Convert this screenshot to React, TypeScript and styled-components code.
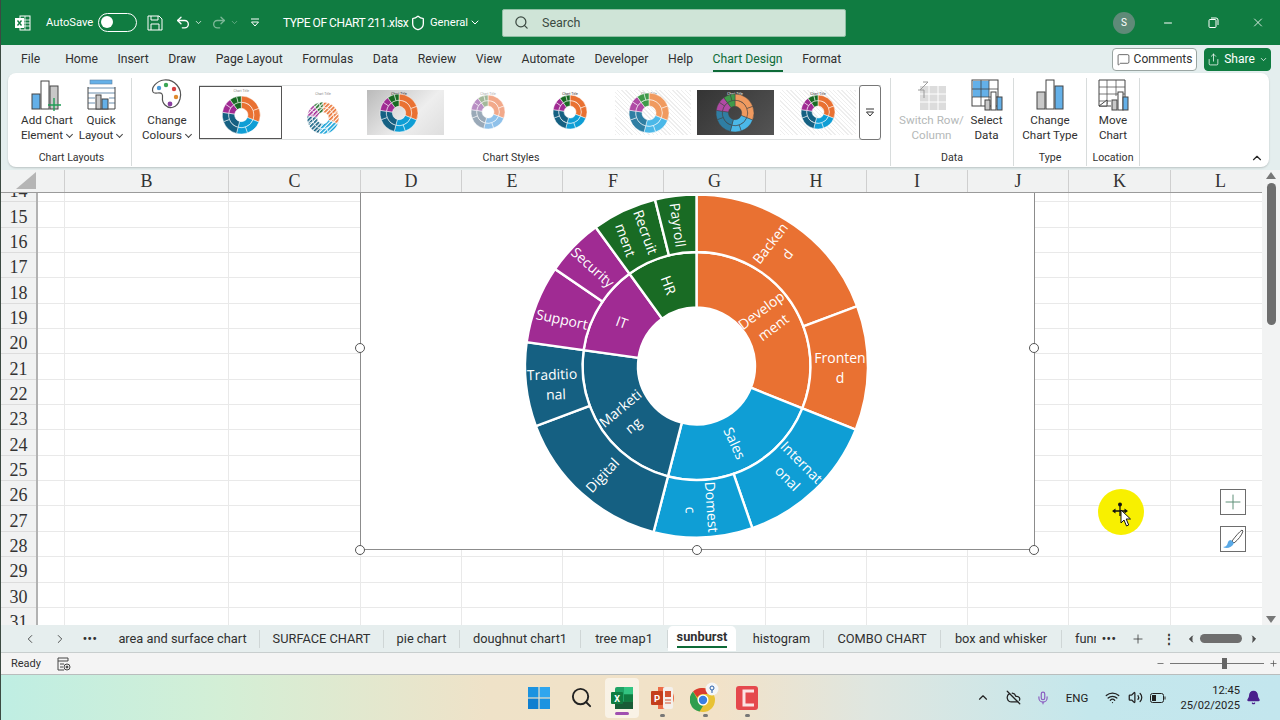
import React from "react";
import styled, { createGlobalStyle } from "styled-components";
import {
  Bell,
  ChevronDown,
  ChevronLeft,
  ChevronRight,
  ChevronUp,
  CloudOff,
  MessageSquare,
  Mic,
  Minus,
  Plus,
  Search,
  Share,
  Shield,
  Undo2,
  Redo2,
  Volume2,
  Wifi,
  X,
} from "lucide-react";

const GlobalStyle = createGlobalStyle`
  html, body { margin: 0; padding: 0; background: #fff; }
  * { box-sizing: border-box; }
`;

const FONT = `Roboto, "Liberation Sans", sans-serif`;

/* ---------- sunburst data ---------- */

type Arc = { from: number; to: number; color: number };

const INNER: Arc[] = [
  { from: 0, to: 111.8, color: 0 },
  { from: 111.8, to: 194.5, color: 1 },
  { from: 194.5, to: 278, color: 2 },
  { from: 278, to: 324, color: 3 },
  { from: 324, to: 360, color: 4 },
];

const OUTER: Arc[] = [
  { from: 0, to: 69.6, color: 0 },
  { from: 69.6, to: 111.8, color: 0 },
  { from: 111.8, to: 161, color: 1 },
  { from: 161, to: 194.5, color: 1 },
  { from: 194.5, to: 249.5, color: 2 },
  { from: 249.5, to: 278, color: 2 },
  { from: 278, to: 304.4, color: 3 },
  { from: 304.4, to: 324, color: 3 },
  { from: 324, to: 346, color: 4 },
  { from: 346, to: 360, color: 4 },
];

const OFFICE = ["#e97132", "#0f9ed5", "#156082", "#a02b93", "#196b24"];
const PASTEL = ["#f2a98a", "#8fc1ea", "#9aa9b8", "#b98fc4", "#a3b89a"];
const LIGHT = ["#f09a5f", "#4bb8e8", "#2f7ea3", "#b04aa5", "#3f9a4a"];

const LABELS = [
  { text: "Backen", x: 770, y: 243, r: -52 },
  { text: "d", x: 787, y: 254, r: -52 },
  { text: "Develop", x: 761, y: 310, r: -37 },
  { text: "ment", x: 773, y: 327, r: -37 },
  { text: "Fronten", x: 840, y: 357, r: 0 },
  { text: "d", x: 840, y: 377, r: 0 },
  { text: "Sales", x: 735, y: 443, r: 65 },
  { text: "Internat", x: 802, y: 462, r: 45 },
  { text: "onal", x: 788, y: 478, r: 45 },
  { text: "Domest", x: 712, y: 507, r: 86 },
  { text: "c", x: 691, y: 510, r: 86 },
  { text: "Marketi", x: 620, y: 408, r: -40 },
  { text: "ng", x: 633, y: 425, r: -40 },
  { text: "Digital", x: 602, y: 475, r: -47 },
  { text: "Traditio", x: 552, y: 374, r: -2 },
  { text: "nal", x: 556, y: 394, r: -2 },
  { text: "IT", x: 622, y: 322, r: 20 },
  { text: "Support", x: 562, y: 319, r: 12 },
  { text: "Security", x: 593, y: 267, r: 42 },
  { text: "HR", x: 669, y: 285, r: 70 },
  { text: "Recruit", x: 646, y: 232, r: 70 },
  { text: "ment", x: 626, y: 240, r: 70 },
  { text: "Payroll", x: 678, y: 225, r: 82 },
];

const polar = (cx: number, cy: number, r: number, deg: number) => {
  const a = ((deg - 90) * Math.PI) / 180;
  return [cx + r * Math.cos(a), cy + r * Math.sin(a)];
};

const arcPath = (cx: number, cy: number, r0: number, r1: number, a: Arc) => {
  const [x0, y0] = polar(cx, cy, r0, a.from);
  const [x1, y1] = polar(cx, cy, r1, a.from);
  const [x2, y2] = polar(cx, cy, r1, a.to);
  const [x3, y3] = polar(cx, cy, r0, a.to);
  const large = a.to - a.from > 180 ? 1 : 0;
  return `M${x0} ${y0}L${x1} ${y1}A${r1} ${r1} 0 ${large} 1 ${x2} ${y2}L${x3} ${y3}A${r0} ${r0} 0 ${large} 0 ${x0} ${y0}Z`;
};

const Rings = ({
  cx,
  cy,
  radii,
  fills,
  gap,
  line = "#fff",
}: {
  cx: number;
  cy: number;
  radii: [number, number, number];
  fills: string[];
  gap: number;
  line?: string;
}) => (
  <>
    {INNER.map((a) => (
      <path
        key={`i${a.from}`}
        d={arcPath(cx, cy, radii[0], radii[1], a)}
        fill={fills[a.color]}
        stroke={line}
        strokeWidth={gap}
      />
    ))}
    {OUTER.map((a) => (
      <path
        key={`o${a.from}`}
        d={arcPath(cx, cy, radii[1], radii[2], a)}
        fill={fills[a.color]}
        stroke={line}
        strokeWidth={gap}
      />
    ))}
  </>
);

/* ---------- shell ---------- */

const Page = styled.div`
  width: 1280px;
  height: 720px;
  display: flex;
  flex-direction: column;
  overflow: hidden;
  position: relative;
  font-family: ${FONT};
  color: #262626;
  background: #e4eeee;
  border-left: 1px solid #3c4a42;
`;

const TitleBar = styled.header`
  height: 45px;
  flex: none;
  display: flex;
  align-items: center;
  padding-left: 14px;
  background: #107c41;
  color: #fff;
  font-size: 11.2px;
`;

const Slot = styled.span<{ $w: number; $ml?: number }>`
  flex: none;
  width: ${(p) => p.$w}px;
  margin-left: ${(p) => p.$ml ?? 0}px;
  display: flex;
  align-items: center;
  justify-content: center;
  white-space: nowrap;
`;

const TitleText = styled(Slot)`
  justify-content: flex-start;
`;

const FileName = styled(TitleText)`
  font-size: 12px;
  letter-spacing: -0.45px;
`;

const Toggle = styled.span`
  width: 39px;
  height: 19px;
  margin-left: 3px;
  border: 1.5px solid #fff;
  border-radius: 10px;
  padding: 2px;
  flex: none;
  &::before {
    content: "";
    display: block;
    width: 12px;
    height: 12px;
    border-radius: 50%;
    background: #fff;
  }
`;

const SearchBox = styled.div`
  width: 344px;
  height: 28px;
  margin-left: 21px;
  flex: none;
  display: flex;
  align-items: center;
  gap: 13px;
  padding-left: 11px;
  background: #cfe4d7;
  border: 1px solid #8fbfa3;
  border-radius: 2px;
  color: #3c4a42;
  font-size: 12.5px;
`;

const Avatar = styled.span`
  width: 22px;
  height: 22px;
  margin-left: 267px;
  flex: none;
  border-radius: 50%;
  background: #5f8a78;
  font-size: 10px;
  display: flex;
  align-items: center;
  justify-content: center;
`;

const MenuBar = styled.nav`
  height: 28px;
  flex: none;
  display: flex;
  align-items: center;
  padding: 0 9px 0 20px;
  font-size: 12.2px;
  color: #303030;
`;

const MenuItem = styled.span<{ $active?: boolean; $ml?: number }>`
  margin-left: ${(p) => p.$ml ?? 19.6}px;
  height: 100%;
  display: flex;
  align-items: center;
  position: relative;
  color: ${(p) => (p.$active ? "#0e6b38" : "inherit")};
  &::after {
    content: "";
    display: ${(p) => (p.$active ? "block" : "none")};
    position: absolute;
    left: 0;
    right: 0;
    bottom: 1px;
    height: 2px;
    background: #0e6b38;
  }
`;

const MenuActions = styled.div`
  margin-left: auto;
  display: flex;
  gap: 7px;
`;

const CommentsButton = styled.span`
  width: 85px;
  height: 23px;
  display: flex;
  align-items: center;
  justify-content: center;
  gap: 4px;
  background: #fff;
  border: 1px solid #9aa5a2;
  border-radius: 4px;
  font-size: 12px;
`;

const ShareButton = styled(CommentsButton)`
  width: 67px;
  background: #107c41;
  border-color: #107c41;
  color: #fff;
`;

/* ---------- ribbon ---------- */

const Ribbon = styled.section`
  height: 94px;
  flex: none;
  margin: 0 11px 3px 7px;
  display: flex;
  background: #fff;
  border-radius: 8px;
  padding: 5px 0 1px;
  box-shadow: 0 1px 2px rgba(0, 0, 0, 0.18);
`;

const Group = styled.div<{ $w: number }>`
  width: ${(p) => p.$w}px;
  flex: none;
  display: flex;
  flex-direction: column;
  border-right: 1px solid #d8dcdc;
`;

const GroupBody = styled.div<{ $pl?: number }>`
  flex: 1;
  display: flex;
  align-items: flex-start;
  padding-left: ${(p) => p.$pl ?? 0}px;
`;

const GroupLabel = styled.div<{ $pl?: number }>`
  height: 16px;
  padding-left: ${(p) => p.$pl ?? 0}px;
  text-align: center;
  font-size: 10.6px;
  line-height: 16px;
  color: #303030;
`;

const RibbonButton = styled.div<{ $w: number; $muted?: boolean }>`
  width: ${(p) => p.$w}px;
  flex: none;
  display: flex;
  flex-direction: column;
  align-items: center;
  font-size: 11.6px;
  line-height: 15px;
  text-align: center;
  white-space: nowrap;
  color: ${(p) => (p.$muted ? "#b4b8b8" : "#303030")};
  svg.ribbon-icon {
    width: 34px;
    height: 34px;
    margin-bottom: 1px;
  }
`;

const Caret = styled.span`
  &::after {
    content: "";
    display: inline-block;
    width: 4px;
    height: 4px;
    margin: 0 1px 2px 4px;
    border-right: 1px solid #444;
    border-bottom: 1px solid #444;
    transform: rotate(45deg);
  }
`;

const Gallery = styled.div`
  width: 682px;
  height: 55px;
  margin: 7px 0 0 5px;
  flex: none;
  display: flex;
  align-items: center;
  border-top: 1px solid #dcdfdf;
  border-bottom: 1px solid #dcdfdf;
`;

const Thumb = styled.div<{ $bg: string; $selected?: boolean }>`
  width: 82.5px;
  height: ${(p) => (p.$selected ? "53px" : "45px")};
  flex: none;
  padding: ${(p) => (p.$selected ? "0" : "0 3px")};
  background: ${(p) => p.$bg};
  background-clip: content-box;
  border: ${(p) => (p.$selected ? "1px solid #555" : "none")};
  svg { display: block; width: 100%; height: 100%; }
`;

const GalleryMore = styled.div`
  width: 22px;
  height: 55px;
  flex: none;
  display: flex;
  align-items: center;
  justify-content: center;
  background: #fff;
  border: 1px solid #777;
  border-radius: 3px;
`;

const Collapse = styled.div`
  margin-left: auto;
  align-self: flex-end;
  padding: 0 5px 1px 0;
  line-height: 0;
`;

/* ---------- sheet ---------- */

const COLS = [
  ["", 27],
  ["B", 164],
  ["C", 132],
  ["D", 101],
  ["E", 101],
  ["F", 101],
  ["G", 102],
  ["H", 101],
  ["I", 101],
  ["J", 101],
  ["K", 102],
  ["L", 100],
] as const;

const ROWS = Array.from({ length: 18 }, (_, i) => 14 + i);

const Workbook = styled.div`
  height: 455px;
  flex: none;
  display: flex;
  position: relative;
`;

const SheetColumn = styled.div`
  width: 1261px;
  flex: none;
  display: flex;
  flex-direction: column;
  overflow: hidden;
`;

const ColumnBar = styled.div`
  height: 23px;
  flex: none;
  display: flex;
  background: #f1f2f2;
  border-bottom: 1px solid #9b9b9b;
  font-family: "Liberation Serif", serif;
  font-size: 18px;
  color: #333;
`;

const Corner = styled.div`
  width: 37px;
  flex: none;
  svg { display: block; }
`;

const ColumnHead = styled.div<{ $w: number }>`
  width: ${(p) => p.$w}px;
  flex: none;
  display: flex;
  align-items: center;
  justify-content: center;
  border-right: 1px solid #cfcfcf;
`;

const SheetArea = styled.div`
  flex: 1;
  display: flex;
  position: relative;
  overflow: hidden;
  background: #fff;
`;

const RowBar = styled.div`
  width: 37px;
  flex: none;
  background: #f1f2f2;
  border-right: 2px solid #b2b2b2;
  font-family: "Liberation Serif", serif;
  font-size: 18px;
  color: #333;
  overflow: hidden;
`;

const RowStack = styled.div`
  margin-top: -16px;
`;

const RowHead = styled.div`
  height: 25.35px;
  padding-top: 5px;
  display: flex;
  align-items: center;
  justify-content: center;
  border-bottom: 1px solid #dcdcdc;
`;

const CellGrid = styled.div`
  flex: none;
  margin-top: -16px;
  display: grid;
  grid-template-columns: ${COLS.map((c) => `${c[1]}px`).join(" ")};
  grid-auto-rows: 25.35px;
  align-content: start;
`;

const Cell = styled.div`
  border-right: 1px solid #e9e9e9;
  border-bottom: 1px solid #e9e9e9;
`;

const ScrollTrack = styled.div`
  flex: 1;
  background: #f2f3f3;
  display: flex;
  flex-direction: column;
  align-items: center;
`;

const ArrowUp = styled.span`
  margin-top: 2px;
  width: 0;
  height: 0;
  border-left: 5px solid transparent;
  border-right: 5px solid transparent;
  border-bottom: 7px solid #777;
`;

const ArrowDown = styled.span`
  margin-top: auto;
  margin-bottom: 2px;
  width: 0;
  height: 0;
  border-left: 5px solid transparent;
  border-right: 5px solid transparent;
  border-top: 7px solid #777;
`;

const ScrollThumb = styled.span`
  width: 9px;
  height: 142px;
  margin-top: 4px;
  border-radius: 5px;
  background: #6e6e6e;
`;

const ChartBox = styled.div`
  position: absolute;
  left: 359px;
  top: -1px;
  width: 675px;
  height: 358px;
  background: #fff;
  border: 1px solid #8c8c8c;
  svg { display: block; }
`;

const Handle = styled.span<{ $x: number; $y: number }>`
  position: absolute;
  left: ${(p) => p.$x}px;
  top: ${(p) => p.$y}px;
  width: 10px;
  height: 10px;
  margin: -5px 0 0 -5px;
  background: #fff;
  border: 1.5px solid #555;
  border-radius: 50%;
`;

const FloatButton = styled.div<{ $top: number }>`
  position: absolute;
  left: 1219px;
  top: ${(p) => p.$top}px;
  width: 26px;
  height: 26px;
  background: #fff;
  border: 1px solid #6d6d6d;
  display: flex;
  align-items: center;
  justify-content: center;
`;

const Spotlight = styled.div`
  position: absolute;
  left: 1097px;
  top: 296px;
  width: 46px;
  height: 46px;
  border-radius: 50%;
  background: #f8f000;
  display: flex;
  align-items: center;
  justify-content: center;
`;

/* ---------- tabs, status, taskbar ---------- */

const TabBar = styled.div`
  height: 28px;
  flex: none;
  display: flex;
  align-items: center;
  background: #e6eeee;
  font-size: 12.8px;
  color: #303030;
  border-bottom: 1px solid #c8cece;
  overflow: hidden;
`;

const TabNav = styled.span<{ $w: number; $ml?: number }>`
  width: ${(p) => p.$w}px;
  margin-left: ${(p) => p.$ml ?? 0}px;
  flex: none;
  display: flex;
  align-items: center;
  justify-content: center;
  font-weight: 700;
  font-size: 12px;
  letter-spacing: 0.5px;
`;

const Tab = styled.span<{ $w: number; $active?: boolean; $clip?: boolean }>`
  width: ${(p) => p.$w}px;
  flex: none;
  height: ${(p) => (p.$active ? "25px" : "18px")};
  margin-top: ${(p) => (p.$active ? "-1px" : "0")};
  display: flex;
  align-items: center;
  justify-content: ${(p) => (p.$clip ? "flex-start" : "center")};
  padding-left: ${(p) => (p.$clip ? "13px" : "0")};
  overflow: hidden;
  white-space: nowrap;
  border-right: ${(p) => (p.$active || p.$clip ? "none" : "1px solid #cfd6d6")};
  background: ${(p) => (p.$active ? "#fff" : "transparent")};
  border-radius: ${(p) => (p.$active ? "5px 5px 0 0" : "0")};
  font-weight: ${(p) => (p.$active ? 700 : 400)};
`;

const ActiveTabLabel = styled.span`
  padding-bottom: 2px;
  border-bottom: 2px solid #0e6b38;
`;

const HScroll = styled.span`
  width: 42px;
  height: 9px;
  margin: 0 6px 0 3px;
  flex: none;
  border-radius: 5px;
  background: #6e6e6e;
`;

const StatusBar = styled.footer`
  height: 22px;
  flex: none;
  display: flex;
  align-items: center;
  padding-left: 10px;
  background: #f4f4f4;
  border-bottom: 1px solid #b9bdbd;
  font-size: 11px;
  color: #303030;
`;

const ZoomSlider = styled.div`
  margin-left: auto;
  display: flex;
  align-items: center;
  gap: 5px;
  padding-right: 2px;
  color: #555;
`;

const ZoomTrack = styled.span`
  width: 94px;
  height: 1px;
  background: #777;
  position: relative;
  &::after {
    content: "";
    position: absolute;
    left: 52px;
    top: -5px;
    width: 5px;
    height: 11px;
    background: #666;
  }
`;

const Taskbar = styled.div`
  flex: 1;
  display: flex;
  align-items: center;
  background: linear-gradient(
    90deg,
    #bfeee3 0%,
    #d3efd6 17%,
    #efe2c8 38%,
    #f2e2c8 56%,
    #dfe6e0 68%,
    #c4e7ec 85%,
    #c3e6ee 100%
  );
`;

const TaskIcon = styled.span<{ $w: number; $ml?: number; $dot?: string }>`
  width: ${(p) => p.$w}px;
  margin-left: ${(p) => p.$ml ?? 0}px;
  height: 45px;
  flex: none;
  display: flex;
  align-items: center;
  justify-content: center;
  position: relative;
  &::after {
    content: "";
    display: ${(p) => (p.$dot ? "block" : "none")};
    position: absolute;
    bottom: 3px;
    left: 50%;
    width: ${(p) => (p.$dot === "#a04fb0" ? "14px" : "5px")};
    height: 3px;
    margin-left: ${(p) => (p.$dot === "#a04fb0" ? "-7px" : "-2px")};
    border-radius: 2px;
    background: ${(p) => p.$dot};
  }
`;

const ActiveTask = styled(TaskIcon)`
  background: rgba(255, 255, 255, 0.55);
  border-radius: 4px;
  height: 40px;
`;

const Lang = styled.span`
  width: 34px;
  margin-left: 10px;
  font-size: 11.5px;
  text-align: center;
  color: #222;
`;

const Clock = styled.div`
  width: 70px;
  margin-left: 4px;
  font-size: 11.2px;
  line-height: 15px;
  text-align: right;
  color: #222;
`;

/* ---------- drawings ---------- */

const AddElementIcon = () => (
  <svg className="ribbon-icon" viewBox="0 0 34 34">
    <rect x="2" y="16" width="8" height="15" fill="#64b0e8" stroke="#444" />
    <rect x="11" y="3" width="8" height="28" fill="#fff" stroke="#444" />
    <rect x="20" y="8" width="8" height="23" fill="#c8c8c8" stroke="#444" />
    <path d="M24 20v13M18 27h13" stroke="#1f9d55" strokeWidth="1.4" />
  </svg>
);

const QuickLayoutIcon = () => (
  <svg className="ribbon-icon" viewBox="0 0 34 34">
    <rect x="6" y="2" width="22" height="4" fill="#64b0e8" stroke="#5a7fa0" strokeWidth=".6" />
    <path d="M4 10h27M4 15h27M4 20h7M25 20h6M4 25h7M25 25h6" stroke="#6d8fae" />
    <path d="M4 9v22h27V9" fill="none" stroke="#444" />
    <rect x="12" y="17" width="5" height="14" fill="#c8c8c8" stroke="#444" />
    <rect x="18" y="21" width="6" height="10" fill="#64b0e8" stroke="#444" />
  </svg>
);

const PaletteIcon = () => (
  <svg className="ribbon-icon" viewBox="0 0 34 34">
    <path
      d="M14 2C6 3 1 10 3 14c2 3 7-1 9 2s-2 6 3 11c4 4 12 4 15-6 3-11-6-20-16-19z"
      fill="#fff"
      stroke="#555"
      strokeWidth="1.2"
    />
    <circle cx="9" cy="10" r="2.2" fill="#4a9ad8" />
    <circle cx="16" cy="7" r="2.2" fill="#3aa655" />
    <circle cx="24" cy="11" r="2.2" fill="#d64040" />
    <circle cx="26" cy="19" r="2.2" fill="#e08a2e" />
    <circle cx="20" cy="26" r="2.4" fill="#8a3fa0" />
  </svg>
);

const SwitchIcon = () => (
  <svg className="ribbon-icon" viewBox="0 0 34 34">
    <rect x="5" y="8" width="26" height="24" fill="#dcdcdc" />
    <path d="M5 16h26M5 24h26M14 8v24M23 8v24" stroke="#fff" />
    <path d="M5 12l8-8M13 4H8M3 12h6v8" fill="none" stroke="#9a9a9a" />
  </svg>
);

const SelectDataIcon = () => (
  <svg className="ribbon-icon" viewBox="0 0 34 34">
    <rect x="2" y="2" width="26" height="26" fill="#fff" stroke="#444" />
    <rect x="3" y="3" width="16" height="16" fill="#64b0e8" />
    <path d="M2 11h26M2 19h26M11 2v26M19 2v26" stroke="#444" strokeWidth=".8" />
    <rect x="15" y="22" width="5" height="10" fill="#c8c8c8" stroke="#444" />
    <rect x="21" y="14" width="5" height="18" fill="#fff" stroke="#444" />
    <rect x="27" y="19" width="5" height="13" fill="#64b0e8" stroke="#444" />
  </svg>
);

const ChangeTypeIcon = () => (
  <svg className="ribbon-icon" viewBox="0 0 34 34">
    <rect x="4" y="14" width="8" height="17" fill="#c8c8c8" stroke="#444" />
    <rect x="13" y="2" width="8" height="29" fill="#fff" stroke="#444" />
    <rect x="22" y="8" width="8" height="23" fill="#64b0e8" stroke="#444" />
  </svg>
);

const MoveChartIcon = () => (
  <svg className="ribbon-icon" viewBox="0 0 34 34">
    <path d="M3 2h26v18M3 2v26h12" fill="#fff" stroke="#444" />
    <path d="M3 9h26M3 16h26M3 23h12M11 2v24M20 2v16" stroke="#555" strokeWidth=".8" />
    <path d="M3 28l8-6v6z" fill="#fff" stroke="#444" />
    <rect x="16" y="22" width="5" height="10" fill="#c8c8c8" stroke="#444" />
    <rect x="22" y="14" width="5" height="18" fill="#fff" stroke="#444" />
    <rect x="27" y="19" width="5" height="13" fill="#64b0e8" stroke="#444" />
  </svg>
);

const ExcelMark = () => (
  <svg width="16" height="16" viewBox="0 0 16 16">
    <rect x="5" y="1" width="10" height="14" fill="none" stroke="#fff" />
    <path d="M5 5h10M5 8h10M5 11h10M10 1v14" stroke="#fff" strokeWidth=".8" />
    <rect x="0" y="3" width="9" height="10" fill="#fff" />
    <path d="M2.5 5.5l4 5M6.5 5.5l-4 5" stroke="#107c41" strokeWidth="1.3" />
  </svg>
);

const SaveIcon = () => (
  <svg width="16" height="16" viewBox="0 0 16 16" fill="none" stroke="#fff">
    <path d="M1 1h11l3 3v11H1z" />
    <path d="M4 1v4h7V1M4 15V9h8v6" />
  </svg>
);

const CustomizeIcon = ({ color = "#fff" }: { color?: string }) => (
  <svg width="10" height="10" viewBox="0 0 10 10">
    <path d="M1 1h8" stroke={color} />
    <path d="M1.500 4h7L5 8z" fill="none" stroke={color} />
  </svg>
);

const RestoreIcon = () => (
  <svg width="11" height="11" viewBox="0 0 11 11" fill="none" stroke="#fff">
    <rect x="1" y="2.500" width="7" height="8" rx="1" />
    <path d="M3 1h5a2 2 0 0 1 2 2v5" />
  </svg>
);

const MacroIcon = () => (
  <svg width="14" height="14" viewBox="0 0 14 14" fill="none" stroke="#444">
    <path d="M1 1h10v3H1zM1 4v9h6M3 7h4M3 10h3" />
    <circle cx="10" cy="10" r="3" />
    <circle cx="10" cy="10" r="1" fill="#444" />
  </svg>
);

const WindowsLogo = () => (
  <svg width="22" height="22" viewBox="0 0 22 22">
    <rect width="10.4" height="10.4" fill="#1b93e0" />
    <rect x="11.6" width="10.4" height="10.4" fill="#2fa6ee" />
    <rect y="11.6" width="10.4" height="10.4" fill="#0f7fd0" />
    <rect x="11.6" y="11.6" width="10.4" height="10.4" fill="#1b93e0" />
  </svg>
);

const ExcelTile = () => (
  <svg width="24" height="24" viewBox="0 0 24 24">
    <rect x="5" y="1" width="18" height="22" rx="2" fill="#21a366" />
    <rect x="14" y="1" width="9" height="7.4" fill="#33c481" />
    <rect x="14" y="8.4" width="9" height="7.3" fill="#107c41" />
    <rect x="5" y="15.7" width="18" height="7.3" fill="#185c37" />
    <rect x="1" y="6" width="12" height="12" rx="1" fill="#107c41" />
    <text x="7" y="15.5" fontFamily="Roboto" fontSize="9" fontWeight="700" fill="#fff" textAnchor="middle">X</text>
  </svg>
);

const PowerPointTile = () => (
  <svg width="24" height="24" viewBox="0 0 24 24">
    <path d="M13 1a11 11 0 1 1 0 22H8V1z" fill="#ed6c47" />
    <rect x="13" y="1" width="10" height="22" rx="2" fill="#f4f0ec" />
    <rect x="15" y="5" width="6" height="6" fill="#d35230" />
    <path d="M15 14h6M15 17h6" stroke="#d35230" />
    <rect x="1" y="5" width="12" height="14" rx="1" fill="#c43e1c" />
    <text x="7" y="15.8" fontFamily="Roboto" fontSize="9.5" fontWeight="700" fill="#fff" textAnchor="middle">P</text>
  </svg>
);

const ChromeTile = () => (
  <svg width="30" height="32" viewBox="0 0 30 32">
    <circle cx="13" cy="18" r="12" fill="#e8c234" />
    <path d="M13 6a12 12 0 0 1 10.4 6H13a6 6 0 0 0-5.6 3.6L3 9.5A12 12 0 0 1 13 6z" fill="#d93c2f" />
    <path d="M3 9.5l5.2 9A6 6 0 0 0 13 24l-3.4 5.5A12 12 0 0 1 3 9.5z" fill="#2f9e4f" />
    <circle cx="13" cy="18" r="5.5" fill="#fff" />
    <circle cx="13" cy="18" r="4.2" fill="#3a7fe0" />
    <circle cx="22" cy="7" r="6.5" fill="#f4f6f8" />
    <circle cx="22" cy="6" r="2" fill="none" stroke="#2a5fa8" />
    <path d="M22 8v3" stroke="#2a5fa8" />
  </svg>
);

const CamtasiaTile = () => (
  <svg width="24" height="26" viewBox="0 0 24 26">
    <rect x="1" y="1" width="22" height="24" rx="3" fill="#e5484d" />
    <path d="M19 6h-10v14h10" fill="none" stroke="#fbe3e3" strokeWidth="3" />
  </svg>
);

const BrushIcon = () => (
  <svg width="22" height="22" viewBox="0 0 22 22">
    <path d="M20 2c-3 2-7 7-10 11l2 2c4-3 8-8 9-12z" fill="#fff" stroke="#555" />
    <path d="M9 12c-3 0-3 3-4 5-1 1-2 2-4 2 3 2 9 1 11-4z" fill="#5aa9e6" />
  </svg>
);

const MoveCursor = () => (
  <svg width="30" height="30" viewBox="0 0 30 30">
    <path d="M14 9v10M9 14h10" stroke="#111" strokeWidth="1.3" />
    <circle cx="14" cy="7.500" r="2" fill="#111" />
    <path d="M6 14l3.500-2.500v5zM22 14l-3.500-2.500v5z" fill="#111" />
    <path d="M15 13v13l3-3 2.500 6 2.200-1-2.500-6h4.300z" fill="#fff" stroke="#111" />
  </svg>
);

/* ---------- gallery ---------- */

const HATCHED = "repeating-linear-gradient(45deg,#fff,#fff 2px,#eee 2px,#eee 3px)";

const THUMBS = [
  { bg: "#fff", fills: OFFICE, cx: 41, cy: 28, r: 19, title: "#888", selected: true },
  { bg: "#fff", fills: OFFICE, cx: 41, cy: 28, r: 16, title: "#888", hatch: true },
  { bg: "linear-gradient(135deg,#b8b8b8,#eee 60%,#ddd)", fills: OFFICE, cx: 35, cy: 23, r: 19, title: "#222" },
  { bg: "#fff", fills: PASTEL, cx: 41, cy: 22, r: 17, title: "#aaa" },
  { bg: "#fff", fills: OFFICE, cx: 41, cy: 22, r: 17, title: "#222" },
  { bg: HATCHED, fills: LIGHT, cx: 37, cy: 23, r: 20, title: "#666" },
  { bg: "linear-gradient(135deg,#333,#555)", fills: LIGHT, cx: 41, cy: 23, r: 19, title: "#fff", dark: true },
  { bg: HATCHED, fills: OFFICE, cx: 41, cy: 22, r: 17, title: "#333" },
];

const Hatch = ({ color, id }: { color: string; id: string }) => (
  <pattern id={id} width="3" height="3" patternUnits="userSpaceOnUse" patternTransform="rotate(45)">
    <rect width="1.7" height="3" fill={color} />
  </pattern>
);

const GalleryThumb = ({ t, i }: { t: (typeof THUMBS)[number]; i: number }) => {
  const fills = t.hatch ? t.fills.map((_, c) => `url(#h${i}${c})`) : t.fills;
  const box = t.selected ? "0 0 80 51" : "3 0 76.500 45";
  return (
    <Thumb $bg={t.bg} $selected={t.selected}>
      <svg viewBox={box}>
        {t.hatch && (
          <defs>
            {t.fills.map((c, n) => (
              <Hatch key={c} color={c} id={`h${i}${n}`} />
            ))}
          </defs>
        )}
        <text x={t.cx} y="5" fontSize="3.4" fontFamily="Roboto" textAnchor="middle" fill={t.title}>
          Chart Title
        </text>
        <Rings
          cx={t.cx}
          cy={t.cy}
          radii={[t.r * 0.35, t.r * 0.67, t.r]}
          fills={fills}
          gap={0.5}
          line={t.dark ? "#444" : "#fff"}
        />
      </svg>
    </Thumb>
  );
};

/* ---------- page ---------- */

const MENU = [
  "Insert",
  "Draw",
  "Page Layout",
  "Formulas",
  "Data",
  "Review",
  "View",
  "Automate",
  "Developer",
  "Help",
];

const TABS = [
  { name: "area and surface chart", w: 154 },
  { name: "SURFACE CHART", w: 124 },
  { name: "pie chart", w: 76 },
  { name: "doughnut chart1", w: 121 },
  { name: "tree map1", w: 87 },
];

const TABS_AFTER = [
  { name: "histogram", w: 84 },
  { name: "COMBO CHART", w: 117 },
  { name: "box and whisker", w: 121 },
];

export default function App() {
  return (
    <>
      <GlobalStyle />
      <Page>
        <TitleBar>
          <ExcelMark />
          <TitleText $w={49} $ml={15}>AutoSave</TitleText>
          <Toggle />
          <Slot $w={16} $ml={10}><SaveIcon /></Slot>
          <Slot $w={16} $ml={12}><Undo2 size={17} /></Slot>
          <Slot $w={10} $ml={2}><ChevronDown size={9} /></Slot>
          <Slot $w={16} $ml={8}><Redo2 size={17} opacity={0.45} /></Slot>
          <Slot $w={10} $ml={2}><ChevronDown size={9} opacity={0.45} /></Slot>
          <Slot $w={10} $ml={11}><CustomizeIcon /></Slot>
          <FileName $w={124} $ml={23}>TYPE OF CHART 211.xlsx</FileName>
          <Slot $w={16} $ml={3}><Shield size={16} /></Slot>
          <TitleText $w={42} $ml={4}>General</TitleText>
          <Slot $w={12} $ml={-3}><ChevronDown size={13} /></Slot>
          <SearchBox>
            <Search size={15} />
            Search
          </SearchBox>
          <Avatar>S</Avatar>
          <Slot $w={12} $ml={27}><Minus size={12} /></Slot>
          <Slot $w={12} $ml={33}><RestoreIcon /></Slot>
          <Slot $w={14} $ml={32}><X size={15} strokeWidth={1.4} /></Slot>
        </TitleBar>

        <MenuBar>
          <MenuItem $ml={0}>File</MenuItem>
          <MenuItem $ml={25}>Home</MenuItem>
          {MENU.map((m) => (
            <MenuItem key={m}>{m}</MenuItem>
          ))}
          <MenuItem $active>Chart Design</MenuItem>
          <MenuItem>Format</MenuItem>
          <MenuActions>
            <CommentsButton>
              <MessageSquare size={13} strokeWidth={1.3} />
              Comments
            </CommentsButton>
            <ShareButton>
              <Share size={13} strokeWidth={1.4} />
              Share
              <ChevronDown size={9} />
            </ShareButton>
          </MenuActions>
        </MenuBar>

        <Ribbon>
          <Group $w={124}>
            <GroupBody $pl={8}>
              <RibbonButton $w={62}>
                <AddElementIcon />
                Add Chart
                <Caret>Element</Caret>
              </RibbonButton>
              <RibbonButton $w={46}>
                <QuickLayoutIcon />
                Quick
                <Caret>Layout</Caret>
              </RibbonButton>
            </GroupBody>
            <GroupLabel $pl={4}>Chart Layouts</GroupLabel>
          </Group>

          <Group $w={759}>
            <GroupBody $pl={8}>
              <RibbonButton $w={54}>
                <PaletteIcon />
                Change
                <Caret>Colours</Caret>
              </RibbonButton>
              <Gallery>
                {THUMBS.map((t, i) => (
                  <GalleryThumb key={i} t={t} i={i} />
                ))}
                <GalleryMore>
                  <CustomizeIcon color="#333" />
                </GalleryMore>
              </Gallery>
            </GroupBody>
            <GroupLabel>Chart Styles</GroupLabel>
          </Group>

          <Group $w={123}>
            <GroupBody $pl={2}>
              <RibbonButton $w={77} $muted>
                <SwitchIcon />
                Switch Row/
                <span>Column</span>
              </RibbonButton>
              <RibbonButton $w={33}>
                <SelectDataIcon />
                Select
                <span>Data</span>
              </RibbonButton>
            </GroupBody>
            <GroupLabel>Data</GroupLabel>
          </Group>

          <Group $w={73}>
            <GroupBody>
              <RibbonButton $w={72}>
                <ChangeTypeIcon />
                Change
                <span>Chart Type</span>
              </RibbonButton>
            </GroupBody>
            <GroupLabel>Type</GroupLabel>
          </Group>

          <Group $w={53}>
            <GroupBody>
              <RibbonButton $w={52}>
                <MoveChartIcon />
                Move
                <span>Chart</span>
              </RibbonButton>
            </GroupBody>
            <GroupLabel>Location</GroupLabel>
          </Group>

          <Collapse>
            <ChevronUp size={14} />
          </Collapse>
        </Ribbon>

        <Workbook>
          <SheetColumn>
            <ColumnBar>
              <Corner>
                <svg width="37" height="22">
                  <polygon points="15,19 35,2 35,19" fill="#b5b5b5" />
                </svg>
              </Corner>
              {COLS.map(([name, w]) => (
                <ColumnHead key={name || "A"} $w={w}>{name}</ColumnHead>
              ))}
            </ColumnBar>

            <SheetArea>
              <RowBar>
                <RowStack>
                  {ROWS.map((r) => (
                    <RowHead key={r}>{r}</RowHead>
                  ))}
                </RowStack>
              </RowBar>
              <CellGrid>
                {ROWS.flatMap((r) => COLS.map((c) => <Cell key={`${r}${c[0]}`} />))}
              </CellGrid>

              <ChartBox>
                <svg width="673" height="356" viewBox="361 193 673 356">
                  <Rings cx={696.5} cy={366} radii={[58.5, 114, 171.5]} fills={OFFICE} gap={2.4} />
                  {LABELS.map((l) => (
                    <text
                      key={`${l.text}${l.x}`}
                      x={l.x}
                      y={l.y}
                      fill="#fff"
                      fontFamily='"Open Sans", sans-serif'
                      fontSize="14"
                      textAnchor="middle"
                      dominantBaseline="central"
                      transform={`rotate(${l.r} ${l.x} ${l.y})`}
                    >
                      {l.text}
                    </text>
                  ))}
                </svg>
                <Handle $x={-1} $y={155} />
                <Handle $x={673} $y={155} />
                <Handle $x={-1} $y={357} />
                <Handle $x={336} $y={357} />
                <Handle $x={673} $y={357} />
              </ChartBox>

              <Spotlight>
                <MoveCursor />
              </Spotlight>

              <FloatButton $top={296}>
                <Plus size={24} color="#5f9079" strokeWidth={1} />
              </FloatButton>
              <FloatButton $top={333}>
                <BrushIcon />
              </FloatButton>
            </SheetArea>
          </SheetColumn>

          <ScrollTrack>
            <ArrowUp />
            <ScrollThumb />
            <ArrowDown />
          </ScrollTrack>
        </Workbook>

        <TabBar>
          <TabNav $w={14} $ml={22}><ChevronLeft size={14} strokeWidth={1.4} /></TabNav>
          <TabNav $w={14} $ml={16}><ChevronRight size={14} strokeWidth={1.4} /></TabNav>
          <TabNav $w={16} $ml={15}>•••</TabNav>
          <TabNav $w={8} />
          {TABS.map((t) => (
            <Tab key={t.name} $w={t.w}>{t.name}</Tab>
          ))}
          <Tab $w={68} $active>
            <ActiveTabLabel>sunburst</ActiveTabLabel>
          </Tab>
          <TabNav $w={4} />
          {TABS_AFTER.map((t) => (
            <Tab key={t.name} $w={t.w}>{t.name}</Tab>
          ))}
          <Tab $w={34} $clip>funnel</Tab>
          <TabNav $w={16} $ml={5}>•••</TabNav>
          <TabNav $w={14} $ml={14}><Plus size={14} strokeWidth={1.3} /></TabNav>
          <TabNav $w={10} $ml={19}>⋮</TabNav>
          <TabNav $w={12} $ml={11}><ChevronLeft size={12} fill="#555" /></TabNav>
          <HScroll />
          <TabNav $w={12}><ChevronRight size={12} fill="#555" /></TabNav>
        </TabBar>

        <StatusBar>
          Ready
          <Slot $w={14} $ml={16}><MacroIcon /></Slot>
          <ZoomSlider>
            <Minus size={9} />
            <ZoomTrack />
            <Plus size={9} />
          </ZoomSlider>
        </StatusBar>

        <Taskbar>
          <TaskIcon $w={24} $ml={526}><WindowsLogo /></TaskIcon>
          <TaskIcon $w={24} $ml={18}><Search size={23} color="#222" strokeWidth={2} /></TaskIcon>
          <ActiveTask $w={34} $ml={12} $dot="#a04fb0"><ExcelTile /></ActiveTask>
          <TaskIcon $w={30} $ml={8} $dot="#777"><PowerPointTile /></TaskIcon>
          <TaskIcon $w={30} $ml={13} $dot="#777"><ChromeTile /></TaskIcon>
          <TaskIcon $w={30} $ml={12} $dot="#777"><CamtasiaTile /></TaskIcon>
          <TaskIcon $w={14} $ml={214}><ChevronUp size={15} color="#222" /></TaskIcon>
          <TaskIcon $w={16} $ml={15}><CloudOff size={15} color="#222" /></TaskIcon>
          <TaskIcon $w={14} $ml={15}><Mic size={16} color="#8a5cc0" /></TaskIcon>
          <Lang>ENG</Lang>
          <TaskIcon $w={16} $ml={10}><Wifi size={15} color="#222" /></TaskIcon>
          <TaskIcon $w={16} $ml={7}><Volume2 size={15} color="#222" /></TaskIcon>
          <TaskIcon $w={16} $ml={7}>
            <svg width="16" height="10" viewBox="0 0 16 10" fill="none" stroke="#222">
              <rect x=".5" y=".5" width="13" height="9" rx="2" />
              <rect x="2" y="2" width="4" height="6" fill="#222" stroke="none" />
              <path d="M15 3.500v3" />
            </svg>
          </TaskIcon>
          <Clock>
            12:45
            <br />
            25/02/2025
          </Clock>
          <TaskIcon $w={16} $ml={5}><Bell size={15} color="#4a1f8c" fill="#4a1f8c" /></TaskIcon>
        </Taskbar>
      </Page>
    </>
  );
}
